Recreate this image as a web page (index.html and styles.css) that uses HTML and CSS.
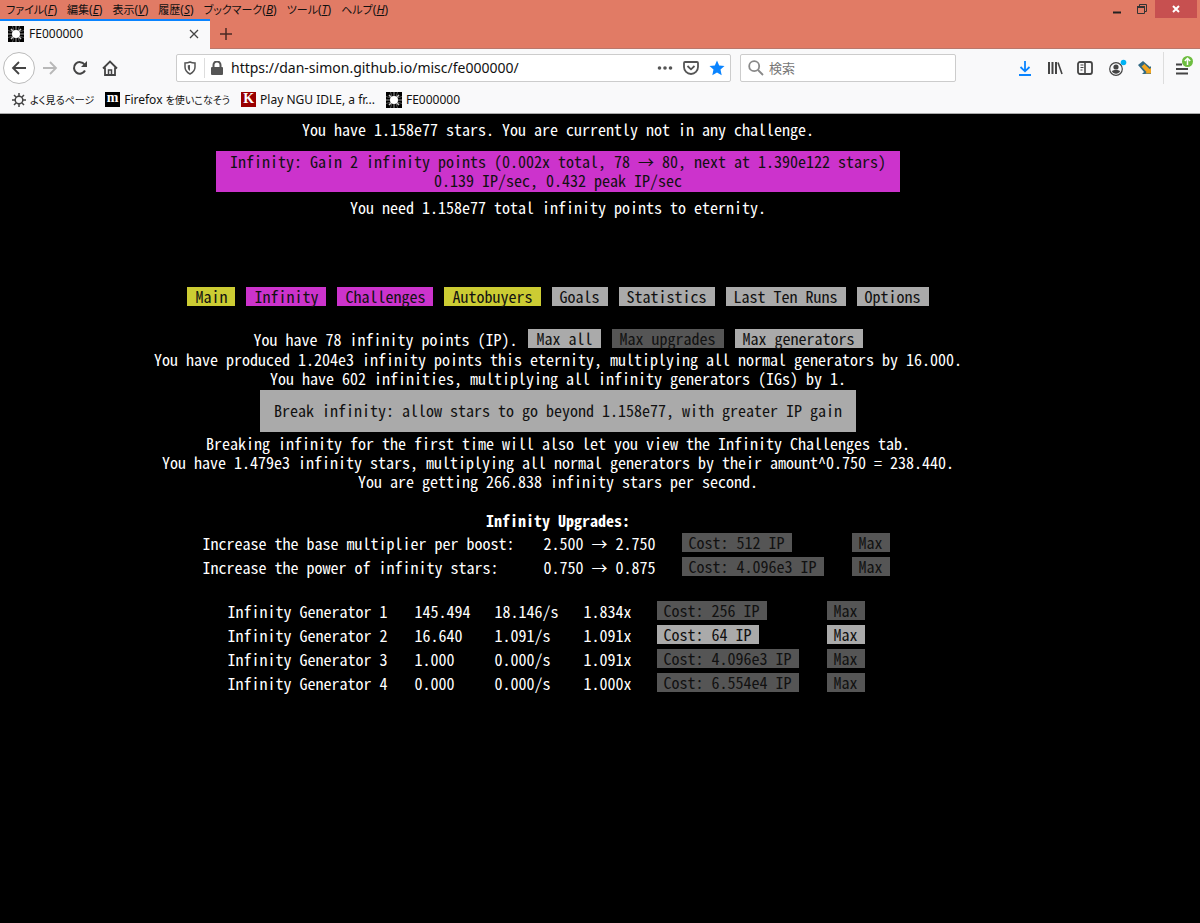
FILE: index.html
```html
<!DOCTYPE html>
<html lang="ja">
<head>
<meta charset="utf-8">
<title>FE000000</title>
<link rel="stylesheet" href="styles.css">
</head>
<body>
<svg class="defs" width="0" height="0" aria-hidden="true">
  <symbol id="burst" viewBox="0 0 16 16">
    <rect width="16" height="16" fill="#000"/>
    <path d="M8 0v16M0 8h16" stroke="#999" stroke-width="1"/>
    <path d="M3 3l10 10M13 3L3 13" stroke="#ccc" stroke-width="1.500"/>
    <path d="M4.500 0l1.500 5M11.500 0L10 5M4.500 16L6 11M11.500 16L10 11M0 4.500L5 6M0 11.500L5 10M16 4.500L11 6M16 11.500L11 10" stroke="#555" stroke-width="1"/>
    <circle cx="8" cy="8" r="4" fill="#fff"/>
  </symbol>
</svg>
<header class="chrome">
  <div class="titlebar">
    <nav class="menus">
      <button>ファイル<span>(<u>F</u>)</span></button>
      <button>編集<span>(<u>E</u>)</span></button>
      <button>表示<span>(<u>V</u>)</span></button>
      <button>履歴<span>(<u>S</u>)</span></button>
      <button>ブックマーク<span>(<u>B</u>)</span></button>
      <button>ツール<span>(<u>T</u>)</span></button>
      <button>ヘルプ<span>(<u>H</u>)</span></button>
    </nav>
    <div class="window-buttons">
      <button aria-label="最小化"><svg width="10" height="12" viewBox="0 0 10 12"><path d="M1 9.500h8" stroke="#222" stroke-width="2"/></svg></button>
      <button aria-label="元に戻す"><svg width="12" height="12" viewBox="0 0 12 12" fill="none" stroke="#333"><path d="M1.500 4h7v6.500h-7z" stroke-width="1"/><path d="M1 4h8" stroke-width="2"/><path d="M3.500 3V1.500h7V8.500H9"/></svg></button>
      <button class="close" aria-label="閉じる"><svg width="8" height="8" viewBox="0 0 8 8"><path d="M1 1l6 6M7 1L1 7" stroke="#fff" stroke-width="2"/></svg></button>
    </div>
  </div>
  <div class="tabs">
    <div class="tab">
      <svg width="16" height="16"><use href="#burst"/></svg>
      <span class="tab-title">FE000000</span>
      <button aria-label="タブを閉じる"><svg width="10" height="10" viewBox="0 0 10 10"><path d="M1 1l8 8M9 1L1 9" stroke="#444" stroke-width="1.300"/></svg></button>
    </div>
    <button class="new-tab" aria-label="新しいタブ"><svg width="14" height="14" viewBox="0 0 14 14"><path d="M7 1v12M1 7h12" stroke="#4a2a24" stroke-width="1.500"/></svg></button>
  </div>
  <div class="toolbar">
    <div class="nav-buttons">
      <button class="back" aria-label="戻る"><svg width="16" height="16" viewBox="0 0 16 16" fill="none" stroke="#444" stroke-width="1.800"><path d="M15 8H2M8 2L2 8l6 6"/></svg></button>
      <button aria-label="進む"><svg width="16" height="16" viewBox="0 0 16 16" fill="none" stroke="#b8b8b8" stroke-width="1.800"><path d="M1 8h13M8 2l6 6-6 6"/></svg></button>
      <button aria-label="再読み込み"><svg width="16" height="16" viewBox="0 0 16 16" fill="none" stroke="#444" stroke-width="2"><path d="M13 10.500A5.800 5.800 0 1 1 12.500 4.500"/><path d="M15 1v6H9z" fill="#444" stroke="none"/></svg></button>
      <button aria-label="ホーム"><svg width="16" height="16" viewBox="0 0 16 16" fill="none" stroke="#444" stroke-width="1.800"><path d="M1 8.500L8 1.500l7 7M3 7.500V15h10V7.500"/><path d="M6.500 15v-5h3v5" stroke-width="1.500"/></svg></button>
    </div>
    <div class="url-box">
      <svg width="14" height="14" viewBox="0 0 14 14" fill="none" stroke="#555"><path d="M7 1c2 1 3.500 1 5 1v4c0 3.500-2 5.500-5 7-3-1.500-5-3.500-5-7V2c1.500 0 3 0 5-1z" stroke-width="1.500"/><path d="M7 4v6c-1.500-1-2.200-2-2.200-4V4.200z" fill="#555" stroke="none"/></svg>
      <span class="split"></span>
      <svg width="12" height="14" viewBox="0 0 12 14"><rect y="6" width="12" height="8" rx="1" fill="#555"/><path d="M2.500 7V4a3.500 3.500 0 0 1 7 0v3" fill="none" stroke="#555" stroke-width="2"/></svg>
      <input type="text" aria-label="アドレス" value="https://dan-simon.github.io/misc/fe000000/">
      <svg width="16" height="16" viewBox="0 0 16 16" fill="#555"><circle cx="2.500" cy="8" r="1.800"/><circle cx="8" cy="8" r="1.800"/><circle cx="13.500" cy="8" r="1.800"/></svg>
      <svg width="16" height="16" viewBox="0 0 16 16" fill="none" stroke="#555" stroke-width="1.800"><path d="M2 2h12a1 1 0 0 1 1 1v4a7 7 0 0 1-14 0V3a1 1 0 0 1 1-1z"/><path d="M4.500 6L8 9.300 11.500 6"/></svg>
      <svg width="16" height="16" viewBox="0 0 16 16"><path d="M8 .5l2.200 4.900 5.300.6-4 3.600 1.200 5.600L8 12.500l-4.700 2.700 1.200-5.600-4-3.600 5.300-.6z" fill="#0a84ff"/></svg>
    </div>
    <div class="search-box">
      <svg width="16" height="16" viewBox="0 0 16 16" fill="none" stroke="#888" stroke-width="1.800"><circle cx="6.200" cy="6.200" r="5"/><path d="M10 10l5 5"/></svg>
      <input type="search" aria-label="検索" placeholder="検索">
    </div>
    <div class="tools">
      <button aria-label="ダウンロード"><svg width="16" height="16" viewBox="0 0 16 16" fill="none" stroke="#0a84ff" stroke-width="1.800"><path d="M8 1v10M3.500 7L8 11.300 12.500 7M2 15h12"/></svg></button>
      <button aria-label="ライブラリー"><svg width="16" height="16" viewBox="0 0 16 16" stroke="#444" stroke-width="2"><path d="M2 2v12M5.500 2v12M9 2v12" /><path d="M11 2.500l4 11.500" stroke-width="1.600"/></svg></button>
      <button aria-label="サイドバー"><svg width="16" height="16" viewBox="0 0 16 16" fill="none" stroke="#444"><rect x="1" y="2" width="14" height="12" rx="2" stroke-width="1.800"/><path d="M8 2v12" stroke-width="1.600"/><path d="M3.500 5h3M3.500 7.500h3M3.500 10h2"/></svg></button>
      <button class="account" aria-label="アカウント"><svg width="20" height="20" viewBox="0 0 20 20"><circle cx="9" cy="11" r="6.300" fill="none" stroke="#444" stroke-width="1.200"/><circle cx="9" cy="9" r="2.600" fill="#444"/><path d="M4.800 13c1.500-1.500 6.900-1.500 8.400 0-1.500 3.600-6.900 3.600-8.400 0z" fill="#444"/><circle cx="16.500" cy="4.500" r="2.800" fill="#00b3f4"/></svg></button>
      <button aria-label="拡張機能"><svg width="16" height="16" viewBox="0 0 16 16"><path d="M1 5l5-4 7 6 1-1v8H5l2-2z" fill="#326a84"/><path d="M4.500 6.500L7.500 4l5 5 1.500-1v5.500H8.500l1-1.500z" fill="#f2a51f"/></svg></button>
      <span class="tool-split"></span>
      <button aria-label="メニュー"><svg width="20" height="24" viewBox="0 0 20 24"><path d="M2 8.500h6M2 13h12M2 17.500h12" stroke="#444" stroke-width="1.800"/><circle cx="13.500" cy="5.500" r="5.500" fill="#6dbd3f"/><path d="M13.500 9V2.500M10.800 5L13.500 2.300l2.700 2.700" fill="none" stroke="#fff" stroke-width="1.500"/></svg></button>
    </div>
  </div>
  <nav class="bookmarks">
    <a href="#"><svg width="14" height="14" viewBox="0 0 14 14" fill="none" stroke="#444"><circle cx="7" cy="7" r="3.800" stroke-width="1.500"/><path d="M7 0v3M7 11v3M0 7h3M11 7h3M2 2l2 2M10 10l2 2M12 2l-2 2M4 10l-2 2" stroke-width="1.500"/></svg><span class="kana">よく見るページ</span></a>
    <a href="#"><span class="fav mozilla">m</span><span>Firefox <span class="kana">を使いこなそう</span></span></a>
    <a href="#"><span class="fav kong">K</span>Play NGU IDLE, a fr...</a>
    <a href="#"><svg width="16" height="16"><use href="#burst"/></svg>FE000000</a>
  </nav>
</header>
<main class="game">
  <p>You have 1.158e77 stars. You are currently not in any challenge.</p>
  <button class="btn magenta prestige">Infinity: Gain 2 infinity points (0.002x total, 78 → 80, next at 1.390e122 stars)<br>0.139 IP/sec, 0.432 peak IP/sec</button>
  <p>You need 1.158e77 total infinity points to eternity.</p>
  <nav class="game-tabs">
    <button class="btn yellow">Main</button>
    <button class="btn magenta">Infinity</button>
    <button class="btn magenta">Challenges</button>
    <button class="btn yellow">Autobuyers</button>
    <button class="btn">Goals</button>
    <button class="btn">Statistics</button>
    <button class="btn">Last Ten Runs</button>
    <button class="btn">Options</button>
  </nav>
  <div class="max-row">
    <span>You have 78 infinity points (IP).</span>
    <button class="btn">Max all</button>
    <button class="btn" disabled>Max upgrades</button>
    <button class="btn">Max generators</button>
  </div>
  <p>You have produced 1.204e3 infinity points this eternity, multiplying all normal generators by 16.000.</p>
  <p>You have 602 infinities, multiplying all infinity generators (IGs) by 1.</p>
  <button class="btn break">Break infinity: allow stars to go beyond 1.158e77, with greater IP gain</button>
  <p>Breaking infinity for the first time will also let you view the Infinity Challenges tab.</p>
  <p>You have 1.479e3 infinity stars, multiplying all normal generators by their amount^0.750 = 238.440.</p>
  <p>You are getting 266.838 infinity stars per second.</p>
  <h2>Infinity Upgrades:</h2>
  <table class="upgrades">
    <colgroup><col class="c-upgrade"><col class="c-effect"><col class="c-cost"><col class="c-max"></colgroup>
    <tr><td>Increase the base multiplier per boost:</td><td>2.500 → 2.750</td><td><button class="btn" disabled>Cost: 512 IP</button></td><td><button class="btn" disabled>Max</button></td></tr>
    <tr><td>Increase the power of infinity stars:</td><td>0.750 → 0.875</td><td><button class="btn" disabled>Cost: 4.096e3 IP</button></td><td><button class="btn" disabled>Max</button></td></tr>
  </table>
  <table class="generators">
    <colgroup><col class="c-name"><col class="c-amount"><col class="c-rate"><col class="c-mult"><col class="c-cost"><col class="c-max"></colgroup>
    <tr><td>Infinity Generator 1</td><td>145.494</td><td>18.146/s</td><td>1.834x</td><td><button class="btn" disabled>Cost: 256 IP</button></td><td><button class="btn" disabled>Max</button></td></tr>
    <tr><td>Infinity Generator 2</td><td>16.640</td><td>1.091/s</td><td>1.091x</td><td><button class="btn">Cost: 64 IP</button></td><td><button class="btn">Max</button></td></tr>
    <tr><td>Infinity Generator 3</td><td>1.000</td><td>0.000/s</td><td>1.091x</td><td><button class="btn" disabled>Cost: 4.096e3 IP</button></td><td><button class="btn" disabled>Max</button></td></tr>
    <tr><td>Infinity Generator 4</td><td>0.000</td><td>0.000/s</td><td>1.000x</td><td><button class="btn" disabled>Cost: 6.554e4 IP</button></td><td><button class="btn" disabled>Max</button></td></tr>
  </table>
</main>
</body>
</html>
```
FILE: styles.css
```css
* { box-sizing: border-box; }
body {
  margin: 0;
  min-height: 100vh;
  background: #000;
  color: #fff;
}
button {
  margin: 0;
  padding: 0;
  border: 0;
  background: none;
  color: inherit;
  font: inherit;
}
svg { display: block; flex: none; }
.defs { position: absolute; }

/* Browser chrome */
.chrome {
  background: #f9f9fa;
  color: #111;
  border-bottom: 1px solid #aaa;
  font: 12px/16px "Noto Sans", "Noto Sans CJK JP", sans-serif;
}
.titlebar {
  display: flex;
  justify-content: space-between;
  height: 19px;
  background: #e17b65;
}
.menus {
  display: flex;
  gap: 10px;
  padding-left: 6px;
  font-size: 11px;
  font-feature-settings: "palt";
}
.menus button { white-space: nowrap; }
.menus span { font-size: 12px; }
.menus u { font-style: italic; }
.window-buttons {
  display: flex;
  align-items: flex-start;
  gap: 14px;
  padding-right: 3px;
}
.window-buttons button {
  display: flex;
  align-items: center;
  justify-content: center;
  height: 18px;
}
.window-buttons .close {
  width: 42px;
  margin-left: -7px;
  background: #c75050;
}
.tabs {
  display: flex;
  height: 30px;
  background: #e17b65;
}
.tab {
  display: flex;
  align-items: center;
  gap: 5px;
  width: 210px;
  padding: 0 11px 2px 8px;
  border-top: 2px solid #0a84ff;
  background: #f9f9fa;
}
.tab-title { flex: 1; }
.new-tab {
  display: flex;
  align-items: center;
  justify-content: center;
  width: 32px;
}
.tabs::after {
  content: "";
  flex: 1;
}
.new-tab, .tabs::after { border-bottom: 1px solid #b9786c; }
.toolbar {
  display: grid;
  grid-template-columns: 176px 555fr 225fr 238fr;
  align-items: center;
  height: 38px;
  padding-right: 6px;
}
.nav-buttons {
  display: flex;
  align-items: center;
  gap: 14px;
  padding-left: 3px;
}
.back {
  display: flex;
  align-items: center;
  justify-content: center;
  width: 32px;
  height: 32px;
  margin-right: -7px;
  border: 1px solid #bbb;
  border-radius: 50%;
  background: #fff;
}
.url-box, .search-box {
  display: flex;
  align-items: center;
  height: 28px;
  border: 1px solid #ccc;
  border-radius: 2px;
  background: #fff;
}
.url-box {
  gap: 10px;
  padding: 0 5px 0 6px;
}
.split {
  width: 1px;
  height: 20px;
  margin: 0 -4px 0 -3px;
  background: #ddd;
}
input {
  flex: 1;
  min-width: 0;
  padding: 0;
  border: 0;
  outline: 0;
  background: none;
  color: #111;
  font: 14px/20px "Noto Sans", "Noto Sans CJK JP", sans-serif;
}
.url-box input { margin-left: -2px; }
.search-box {
  gap: 5px;
  margin-left: 9px;
  padding-left: 7px;
}
.search-box input { font-size: 13px; }
.search-box input::placeholder { color: #777; opacity: 1; }
.tools {
  display: flex;
  align-items: center;
  justify-content: flex-end;
  gap: 14px;
}
.account { margin-right: -4px; }
.tool-split {
  width: 1px;
  height: 32px;
  margin: 0 -4px 0 -4px;
  background: #ddd;
}
.bookmarks {
  display: flex;
  align-items: center;
  gap: 11px;
  height: 26px;
  padding: 0 0 1px 12px;
  font-feature-settings: "palt";
}
.bookmarks a {
  display: flex;
  align-items: center;
  gap: 4px;
  color: #111;
  text-decoration: none;
  white-space: nowrap;
}
.kana { font-size: 10px; }
.fav {
  width: 15px;
  height: 15px;
  color: #fff;
  font: bold 14px/14px "Liberation Serif", serif;
  text-align: center;
}
.mozilla {
  background: #000;
  line-height: 12px;
}
.kong { background: #990000; }

/* Game page */
.game {
  display: flex;
  flex-direction: column;
  align-items: center;
  padding: 6px 7% 24px 0;
  font: 16px/19px "Noto Sans Mono CJK JP", "Liberation Mono", monospace;
}
.game p, .game h2 {
  margin: 0;
  font-size: 16px;
  line-height: 19px;
  text-align: center;
}
.btn {
  padding: 0 8px 1px;
  background: #aaa;
  color: #111;
  line-height: 18px;
  white-space: nowrap;
}
.btn:disabled { background: #555; }
.btn.magenta { background: #cc33cc; }
.btn.yellow { background: #cccc33; }
.prestige {
  min-width: 684px;
  margin: 12px 0 6px;
  padding: 1px 8px 2px;
  line-height: 19px;
}
.game-tabs {
  display: flex;
  gap: 11px;
  margin: 70px 0 23px;
}
.max-row {
  display: flex;
  align-items: center;
  gap: 11px;
  margin-bottom: 2px;
  line-height: 18px;
}
.break {
  min-width: 596px;
  margin: 2px 0;
  padding: 11px 8px 13px;
}
.game h2 { margin: 20px 0 1px; }
table {
  margin-right: 24px;
  border-collapse: collapse;
  table-layout: fixed;
}
.upgrades { width: 687px; }
.generators { width: 637px; margin-top: 20px; }
td {
  height: 24px;
  padding: 0 0 1px;
  line-height: 18px;
  vertical-align: middle;
  white-space: nowrap;
}
td .btn {
  display: block;
  padding: 0 7px 1px;
}
.c-upgrade { width: 341px; }
.c-effect { width: 138px; }
.c-cost { width: 170px; }
.c-max { width: 38px; }
.c-name { width: 187px; }
.c-amount { width: 80px; }
.c-rate { width: 89px; }
.c-mult { width: 73px; }
```
